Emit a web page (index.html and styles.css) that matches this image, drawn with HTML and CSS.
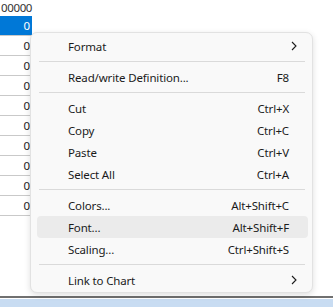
FILE: index.html
```html
<!DOCTYPE html>
<html>
<head>
  <meta charset="utf-8">
  <title>Context menu</title>
  <link rel="stylesheet" href="styles.css">
</head>
<body>

<div class="sheet">
    <div class="column">
        <div class="head">00000</div>
        <div class="cell selected">0</div>
        <div class="cell">0</div>
        <div class="cell">0</div>
        <div class="cell">0</div>
        <div class="cell">0</div>
        <div class="cell">0</div>
        <div class="cell">0</div>
        <div class="cell">0</div>
        <div class="cell">0</div>
        <div class="cell">0</div>
    </div>
</div>

<div class="statusbar"></div>

<!-- popup menu over the sheet -->
<div class="menu">
    <div class="item"><span class="label">Format</span>
        <svg class="arrow" width="6" height="10" viewBox="0 0 6 10"><polyline points="1,1 5,5 1,9" fill="none" stroke="#1b1b1b" stroke-width="1.1"/></svg>
    </div>
    <div class="separator"></div>
    <div class="item"><span class="label">Read/write Definition...</span><span class="key">F8</span></div>
    <div class="separator"></div>
    <div class="item"><span class="label">Cut</span><span class="key">Ctrl+X</span></div>
    <div class="item"><span class="label">Copy</span><span class="key">Ctrl+C</span></div>
    <div class="item"><span class="label">Paste</span><span class="key">Ctrl+V</span></div>
    <div class="item"><span class="label">Select All</span><span class="key">Ctrl+A</span></div>
    <div class="separator"></div>
    <div class="item"><span class="label">Colors...</span><span class="key">Alt+Shift+C</span></div>
    <div class="item hover"><span class="label">Font...</span><span class="key">Alt+Shift+F</span></div>
    <div class="item"><span class="label">Scaling...</span><span class="key">Ctrl+Shift+S</span></div>
    <div class="separator"></div>
    <div class="item"><span class="label">Link to Chart</span>
        <svg class="arrow" width="6" height="10" viewBox="0 0 6 10"><polyline points="1,1 5,5 1,9" fill="none" stroke="#1b1b1b" stroke-width="1.1"/></svg>
    </div>
</div>

</body>
</html>
```

FILE: styles.css
```css
html, body {
    margin: 0;
    width: 333px;
    height: 308px;
    overflow: hidden;
    background: #ffffff;
    font-family: "Noto Sans", "Open Sans", sans-serif;
    font-size: 11.5px;
    letter-spacing: -0.15px;
    color: #1b1b1b;
}

.sheet {
    height: 296px;
    background: #ffffff;
}

.column {
    width: 32px;
}

.head {
    height: 16px;
    line-height: 16px;
    text-align: right;
    white-space: nowrap;
    letter-spacing: -0.4px;
    color: #333;
}

.cell {
    height: 19px;
    line-height: 19px;
    text-align: right;
    padding-right: 2px;
    border-bottom: 1px solid #c9c9c9;
    color: #222;
}

.cell.selected {
    background: #0078d7;
    color: #ffffff;
}

.statusbar {
    height: 9px;
    border-top: 2px solid #707070;
    box-shadow: inset 0 1px 0 #ffffff;
    background: #c8dcf2;
}

.menu {
    position: absolute;
    left: 30px;
    top: 32px;
    width: 281px;
    padding: 2px 0 1px;
    background: #f9f9f9;
    border: 1px solid #e2e2e2;
    border-radius: 7px;
    box-shadow: 0 2px 6px rgba(0, 0, 0, 0.13);
}

.item {
    display: flex;
    align-items: center;
    height: 22px;
    margin: 0 4px 0 6px;
    padding: 0 19px 0 31px;
    border-radius: 4px;
}

.item.hover {
    background: #ebebeb;
}

.label {
    flex: 1;
}

.arrow {
    margin-right: -8px;
}

.separator {
    height: 1px;
    margin: 4px 7px 4px 8px;
    background: #dadada;
}
```
